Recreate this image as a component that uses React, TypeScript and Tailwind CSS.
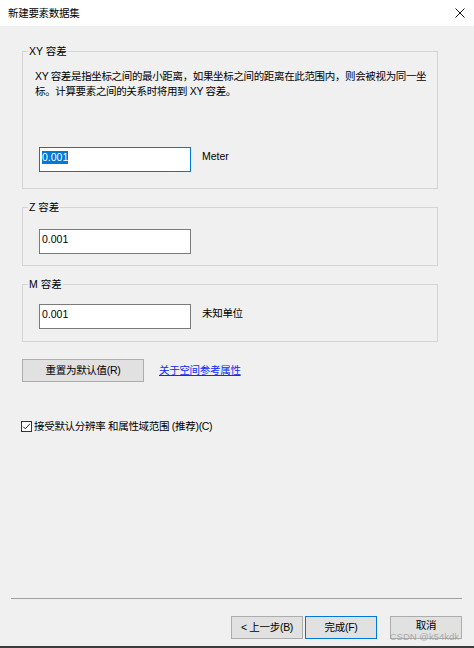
import React from "react";

const font = "font-['Liberation_Sans','Noto_Sans_CJK_SC',sans-serif]";

function ValueBox({ value, focused }: { value: string; focused?: boolean }) {
  return (
    <div
      className={`w-[152px] h-[25px] bg-white border pl-[2px] pt-[2px] ${
        focused ? "border-[#0078d7]" : "border-[#7a7a7a]"
      }`}
    >
      <span
        className={`inline-block leading-[13px] ${
          focused ? "bg-[#0078d7] text-white" : ""
        }`}
      >
        {value}
      </span>
    </div>
  );
}

function WinButton({
  children,
  primary,
  className = "",
}: {
  children: React.ReactNode;
  primary?: boolean;
  className?: string;
}) {
  return (
    <button
      className={`h-[23px] bg-[#e1e1e1] border flex items-center justify-center leading-none ${
        primary ? "border-[#0078d7]" : "border-[#adadad]"
      } ${className}`}
    >
      {children}
    </button>
  );
}

export default function App() {
  return (
    <div
      className={`relative w-[474px] h-[648px] flex flex-col bg-[#f0f0f0] text-black text-[10.5px] leading-[15px] ${font}`}
    >
      {/* Title bar */}
      <div className="h-[26px] shrink-0 bg-white flex items-center justify-between pl-[8px] pr-[9px]">
        <span className="tracking-[-0.3px]">新建要素数据集</span>
        <svg width="10" height="10" viewBox="0 0 10 10" className="mb-[1px]">
          <path d="M0.5 0.5L9.5 9.5M9.5 0.5L0.5 9.5" stroke="#111" strokeWidth="1" />
        </svg>
      </div>

      {/* Body */}
      <div className="flex flex-col pl-[22px] pr-[36px] pt-[18px]">
        <fieldset className="border border-[#d5d5d5] pb-[16px]">
          <legend className="ml-[5px] px-[1px]">XY 容差</legend>
          <p className="pl-[12px] pt-[10px] tracking-[-0.35px] whitespace-nowrap">
            XY 容差是指坐标之间的最小距离，如果坐标之间的距离在此范围内，则会被视为同一坐
            <br />
            标。计算要素之间的关系时将用到 XY 容差。
          </p>
          <div className="flex items-start pl-[16px] mt-[48px]">
            <ValueBox value="0.001" focused />
            <span className="ml-[11px] mt-[2px]">Meter</span>
          </div>
        </fieldset>

        <fieldset className="border border-[#d5d5d5] mt-[11px] pb-[11px]">
          <legend className="ml-[5px] px-[1px]">Z 容差</legend>
          <div className="flex items-start pl-[16px] mt-[14px]">
            <ValueBox value="0.001" />
          </div>
        </fieldset>

        <fieldset className="border border-[#d5d5d5] mt-[11px] pb-[12px]">
          <legend className="ml-[5px] px-[1px]">M 容差</legend>
          <div className="flex items-start pl-[16px] mt-[12px]">
            <ValueBox value="0.001" />
            <span className="ml-[11px] mt-[2px] tracking-[-0.3px]">未知单位</span>
          </div>
        </fieldset>

        <div className="flex items-center mt-[17px]">
          <WinButton className="w-[122px] tracking-[-0.3px]">重置为默认值(R)</WinButton>
          <a href="#" className="ml-[15px] text-[#0a2cf5] underline tracking-[-0.3px]">
            关于空间参考属性
          </a>
        </div>

        <label className="flex items-center mt-[37px] -ml-[1px]">
          <svg width="11" height="11" viewBox="0 0 11 11" className="shrink-0">
            <rect x="0.5" y="0.5" width="10" height="10" fill="#fff" stroke="#333" />
            <path d="M2.2 5.6L4.3 7.8L8.9 2.8" fill="none" stroke="#222" strokeWidth="1" />
          </svg>
          <span className="ml-[2px] tracking-[-0.3px]">接受默认分辨率 和属性域范围 (推荐)(C)</span>
        </label>
      </div>

      <div className="flex-1" />

      {/* Footer */}
      <div className="h-px bg-[#a0a0a0] ml-[11px] mr-[12px]" />
      <div className="flex justify-end pr-[12px] mt-[17px]">
        <WinButton className="w-[72px] tracking-[-0.3px]">&lt; 上一步(B)</WinButton>
        <WinButton primary className="w-[72px] ml-[2px] tracking-[-0.3px]">
          完成(F)
        </WinButton>
        <WinButton className="w-[72px] ml-[13px] tracking-[-0.3px] pb-[4px]">取消</WinButton>
      </div>
      <div className="h-[7px]" />
      <div className="h-[2px] bg-[#3c3c3c]" />

      {/* Watermark */}
      <span className="absolute right-[15px] bottom-[6px] text-[9.5px] leading-[11px] text-[#9a9a9a]/80 font-['Liberation_Sans',sans-serif]">
        CSDN @k54kdk
      </span>
    </div>
  );
}
